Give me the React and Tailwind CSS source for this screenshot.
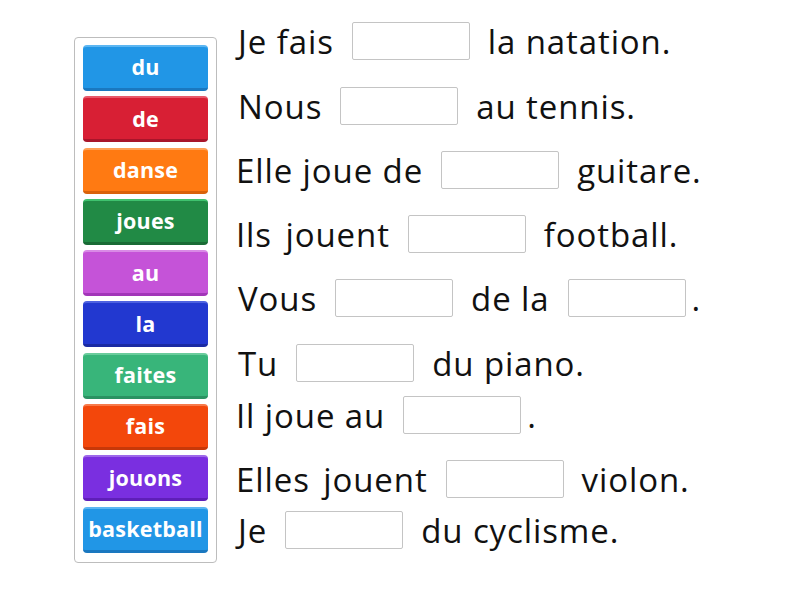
import React from 'react';

const tiles = [
  { word: 'du', cls: 'bg-[#2196e6] border-t-[#5cb6f2] border-b-[#1a78c0]' },
  { word: 'de', cls: 'bg-[#d81f34] border-t-[#e8586a] border-b-[#a8152a]' },
  { word: 'danse', cls: 'bg-[#ff7a12] border-t-[#ffa055] border-b-[#d9620a]' },
  { word: 'joues', cls: 'bg-[#218a45] border-t-[#3fc26e] border-b-[#196b35]' },
  { word: 'au', cls: 'bg-[#c553d8] border-t-[#d98ae6] border-b-[#a235b8]' },
  { word: 'la', cls: 'bg-[#2238d0] border-t-[#4d62e0] border-b-[#1a2aa3]' },
  { word: 'faites', cls: 'bg-[#38b57a] border-t-[#6acc9c] border-b-[#2a9262]' },
  { word: 'fais', cls: 'bg-[#f3470b] border-t-[#f77a4a] border-b-[#c83808]' },
  { word: 'jouons', cls: 'bg-[#7a2fe0] border-t-[#9f68ea] border-b-[#5f1fb8]' },
  { word: 'basketball', cls: 'bg-[#2196e6] border-t-[#5cb6f2] border-b-[#1a78c0]' },
];

function Blank() {
  return <span className="mx-[18px] inline-block h-[38px] w-[118px] shrink-0 rounded-[2px] border border-[#c4c4c4] bg-white" />;
}

function Row({ className, children }) {
  return <div className={'flex h-[40px] items-center whitespace-pre ' + className}>{children}</div>;
}

export default function App() {
  return (
    <div className="flex h-[600px] w-[800px] bg-white font-['Open_Sans','Noto_Sans',sans-serif] text-[#111]">
      <div className="ml-[74px] mt-[37px] h-[526px] w-[143px] shrink-0 rounded-[4px] border border-[#bdbdbd] px-[8px] py-[7px]">
        <div className="flex flex-col gap-[5.3px]">
          {tiles.map((t) => (
            <div
              key={t.word}
              className={'flex h-[46px] items-center justify-center rounded-[4px] border-t-2 border-b-[3px] text-[21.5px] font-bold tracking-[0.2px] text-white ' + t.cls}
            >
              {t.word}
            </div>
          ))}
        </div>
      </div>

      <div className="ml-[18px] flex flex-col text-[33px] leading-none tracking-[0.9px]">
        <Row className="mt-[21px] pl-[3px]">Je fais<Blank />la natation.</Row>
        <Row className="mt-[25px] pl-[3px]">Nous<Blank />au tennis.</Row>
        <Row className="mt-[24px] pl-[1px]">Elle joue de<Blank />guitare.</Row>
        <Row className="mt-[24px] pl-[1px]">Ils <span className="ml-[4px]">jouent</span><Blank />football.</Row>
        <Row className="mt-[24px] pl-[3px]">Vous<Blank />de la<Blank /><span className="-ml-[12px]">.</span></Row>
        <Row className="mt-[25px] pl-[3px]">Tu<Blank />du piano.</Row>
        <Row className="mt-[12px] pl-[1px]">Il joue au<Blank /><span className="-ml-[12px]">.</span></Row>
        <Row className="mt-[24px] pl-[1px]">Elles <span className="ml-[4px]">jouent</span><Blank />violon.</Row>
        <Row className="mt-[11px] pl-[3px]">Je<Blank />du cyclisme.</Row>
      </div>
    </div>
  );
}
